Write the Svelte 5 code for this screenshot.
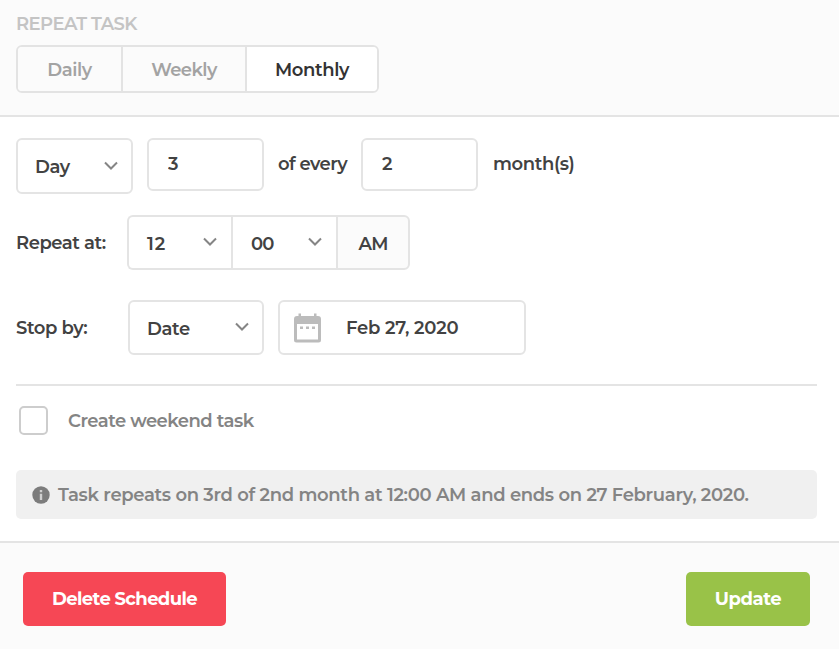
<script lang="ts">
  let frequencies = ['Daily', 'Weekly', 'Monthly'];
  let frequency = $state('Monthly');
  let day = $state('3');
  let interval = $state('2');
  let meridiem = $state('AM');
  let weekend = $state(false);

  function toggleMeridiem() {
    meridiem = meridiem === 'AM' ? 'PM' : 'AM';
  }
</script>

{#snippet dropdown(label: string, kind: string)}
  <button class="field dropdown {kind}">
    <span>{label}</span>
    <svg class="chevron" width="14" height="10" viewBox="0 0 14 10" fill="none" stroke="currentColor">
      <path stroke-width="2" d="M1 1.5l6 6 6-6" />
    </svg>
  </button>
{/snippet}

<div class="scheduler">
  <header>
    <h2>REPEAT TASK</h2>
    <div class="tabs">
      {#each frequencies as name}
        <button class="tab {name.toLowerCase()}" class:active={frequency === name} onclick={() => (frequency = name)}>
          <span>{name}</span>
        </button>
      {/each}
    </div>
  </header>

  <main>
    <div class="row interval-row">
      {@render dropdown('Day', 'unit')}
      <input class="field number" aria-label="Day of month" bind:value={day} />
      <span class="every">of every</span>
      <input class="field number second" aria-label="Months" bind:value={interval} />
      <span class="months">month(s)</span>
    </div>

    <div class="row time-row">
      <span class="label repeat">Repeat at:</span>
      <div class="time">
        {@render dropdown('12', 'hour')}
        {@render dropdown('00', 'minute')}
        <button class="field meridiem" onclick={toggleMeridiem}>{meridiem}</button>
      </div>
    </div>

    <div class="row stop-row">
      <span class="label stop">Stop by:</span>
      {@render dropdown('Date', 'until')}
      <button class="field date">
        <svg width="27" height="30" viewBox="0 0 27 30">
          <path
            fill="#bcbcbc"
            fill-rule="evenodd"
            d="M4.5 0.500h2.500V3h13V0.500h2.500V3H24a3 3 0 0 1 3 3v21a2.500 2.500 0 0 1-2.500 2.500h-22A2.500 2.500 0 0 1 0 27V6a3 3 0 0 1 3-3h1.500zM3 11v15.500h21V11z"
          />
          <path fill="#bcbcbc" d="M6 13.500h3v2.500H6zm6 0h3v2.500h-3zm6 0h3v2.500h-3z" />
        </svg>
        <span>Feb 27, 2020</span>
      </button>
    </div>

    <label class="weekend">
      <input type="checkbox" bind:checked={weekend} />
      <span>Create weekend task</span>
    </label>

    <div class="summary">
      <svg width="18" height="18" viewBox="0 0 18 18">
        <circle cx="9" cy="9" r="8.700" fill="#7c7c7c" />
        <path fill="#d0d0d0" d="M7.800 4h2.400v2.300H7.800zm0 3.700h2.400V14H7.800z" />
      </svg>
      <span>Task repeats on 3rd of 2nd month at 12:00 AM and ends on 27 February, 2020.</span>
    </div>
  </main>

  <footer>
    <button class="action delete"><span>Delete Schedule</span></button>
    <button class="action update"><span>Update</span></button>
  </footer>
</div>

<style>
  :global(body) {
    background: #fff;
  }

  .scheduler,
  .scheduler * {
    box-sizing: border-box;
  }

  .scheduler {
    display: flex;
    flex-direction: column;
    height: 649px;
    overflow: hidden;
    font-family: Montserrat, Inter, 'Open Sans', sans-serif;
    font-size: 18px;
    font-weight: 600;
    line-height: 24px;
    letter-spacing: -0.4px;
    color: #424242;
  }

  button,
  input {
    margin: 0;
    padding: 0;
    font: inherit;
    letter-spacing: inherit;
    color: inherit;
    background: #fff;
  }

  span {
    white-space: nowrap;
  }

  header {
    height: 117px;
    padding: 12px 16px 0;
    background: #fbfbfb;
    border-bottom: 2px solid #e4e4e4;
  }

  h2 {
    margin: 0 0 9px;
    font-size: 18px;
    font-weight: 600;
    line-height: 24px;
    letter-spacing: -0.55px;
    color: #c4c4c4;
  }

  .tabs {
    display: flex;
    width: 363px;
    height: 48px;
    border: 2px solid #e3e3e3;
    border-radius: 6px;
    overflow: hidden;
  }

  .tab {
    width: 103px;
    padding-top: 2px;
    border: none;
    background: #fbfbfb;
    color: #a3a3a3;
  }

  .tab.weekly {
    width: 126px;
    border-left: 2px solid #e3e3e3;
    border-right: 2px solid #e3e3e3;
    letter-spacing: -0.55px;
  }

  .tab.monthly {
    flex: 1;
  }

  .tab.active {
    background: #fff;
    color: #333;
  }

  main {
    height: 424px;
    padding: 21px 22px 0 16px;
  }

  .row {
    display: flex;
    align-items: center;
  }

  .field {
    height: 55px;
    border: 2px solid #e4e4e4;
    border-radius: 6px;
    text-align: left;
  }

  .dropdown {
    display: flex;
    align-items: center;
    justify-content: space-between;
    padding: 2px 13px 0 17px;
  }

  .chevron {
    margin-top: -3px;
    color: #858585;
  }

  .interval-row {
    align-items: flex-start;
  }

  .unit {
    width: 117px;
    height: 56px;
  }

  .number {
    width: 117px;
    height: 53px;
    margin-left: 14px;
    padding: 0 0 1px 19px;
  }

  .every,
  .months {
    margin-top: 14px;
  }

  .every {
    width: 83px;
    margin-left: 14px;
    letter-spacing: -0.55px;
  }

  .number.second {
    margin-left: 0;
  }

  .months {
    margin-left: 15px;
  }

  .time-row {
    margin-top: 21px;
  }

  .repeat {
    width: 111px;
    letter-spacing: -0.45px;
  }

  .time {
    display: flex;
  }

  .hour {
    width: 104px;
    padding: 2px 14px 0 18px;
    border-right: none;
    border-radius: 6px 0 0 6px;
    letter-spacing: 0.8px;
  }

  .minute {
    width: 105px;
    padding: 2px 14px 0 18px;
    border-right: none;
    border-radius: 0;
    letter-spacing: -0.8px;
  }

  .meridiem {
    width: 74px;
    padding-top: 2px;
    border-radius: 0 6px 6px 0;
    background: #fbfbfb;
    letter-spacing: -0.8px;
    text-align: center;
  }

  .stop-row {
    height: 86px;
    margin-top: 30px;
    padding-bottom: 29px;
    border-bottom: 2px solid #e4e4e4;
  }

  .stop {
    width: 112px;
  }

  .until {
    width: 136px;
  }

  .date {
    display: flex;
    align-items: center;
    width: 248px;
    margin-left: 14px;
    padding-left: 14px;
  }

  .date span {
    margin: 0 0 0 25px;
    letter-spacing: -0.2px;
  }

  .weekend {
    display: flex;
    align-items: center;
    height: 29px;
    margin-top: 20px;
    padding-left: 3px;
    letter-spacing: -0.5px;
    color: #848484;
  }

  .weekend input {
    appearance: none;
    width: 29px;
    height: 29px;
    margin-right: 20px;
    border: 2px solid #cdcdcd;
    border-radius: 5px;
  }

  .summary {
    display: flex;
    align-items: center;
    height: 49px;
    margin-top: 35px;
    padding-left: 16px;
    border-radius: 5px;
    background: #f0f0f0;
    color: #848484;
  }

  .summary span {
    margin-left: 8px;
    letter-spacing: -0.32px;
  }

  footer {
    display: flex;
    justify-content: space-between;
    align-items: flex-start;
    height: 108px;
    padding: 29px 29px 0 23px;
    border-top: 2px solid #e4e4e4;
    background: #fbfbfb;
  }

  .action {
    height: 54px;
    border: none;
    border-radius: 5px;
    font-weight: 700;
    color: #fff;
  }

  .delete {
    width: 203px;
    letter-spacing: -0.65px;
    background: #f64755;
  }

  .update {
    width: 124px;
    letter-spacing: -0.4px;
    background: #99c248;
  }
</style>
